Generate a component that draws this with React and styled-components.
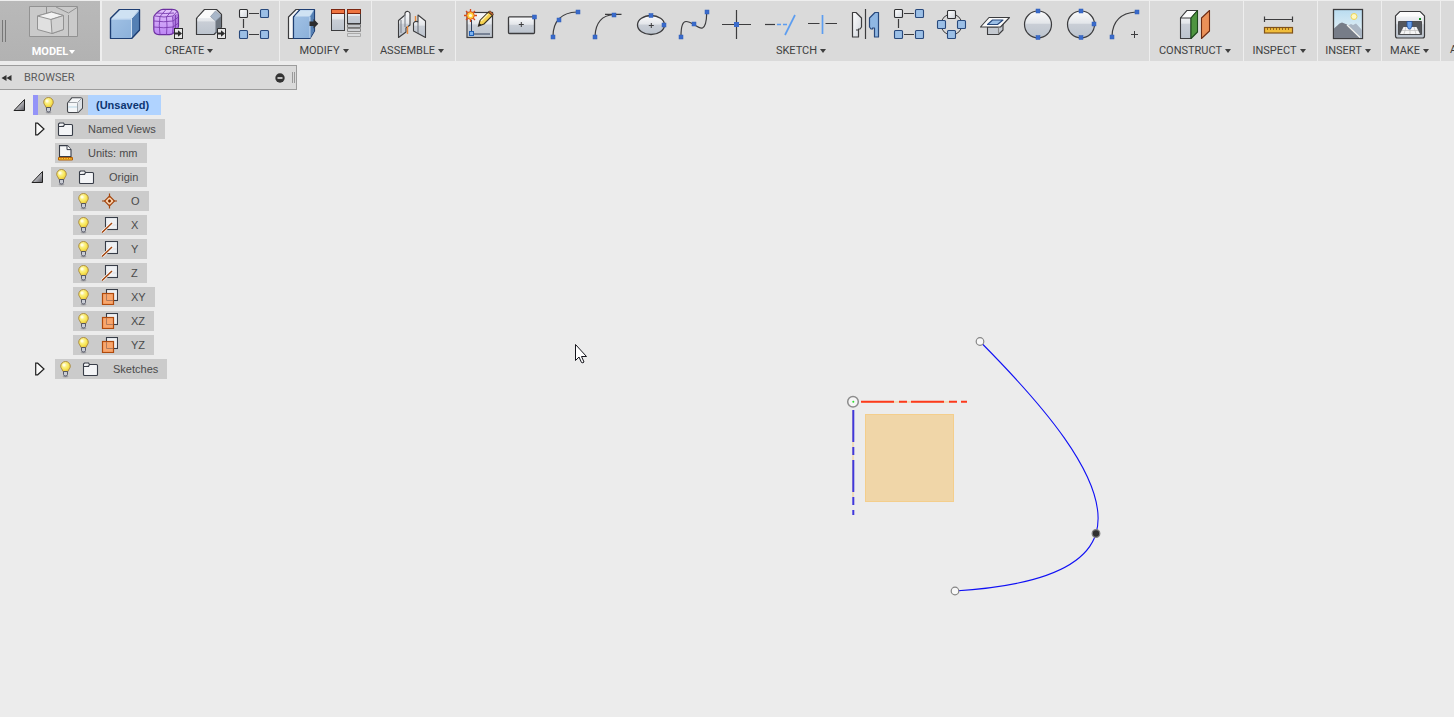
import React from "react";
import styled, { createGlobalStyle } from "styled-components";

const GlobalStyle = createGlobalStyle`
  * { box-sizing: border-box; }
  body {
    margin: 0;
    background: #ececec;
    font-family: "Liberation Sans", Arial, sans-serif;
    font-size: 11px;
  }
  button {
    border: 0;
    padding: 0;
    margin: 0;
    background: none;
    color: inherit;
    font: inherit;
    cursor: pointer;
  }
  ul { list-style: none; margin: 0; padding: 0; }
`;

const App = styled.div`
  display: flex;
  flex-direction: column;
  min-height: 100vh;
  overflow: hidden;
`;

const Toolbar = styled.header`
  display: flex;
  height: 61px;
  padding-top: 1px;
  gap: 1px;
  overflow: hidden;
  background: #eeeeee;
`;

const Group = styled.section`
  display: flex;
  flex: ${(p) => (p.$fill ? "1 0 auto" : "none")};
  flex-direction: column;
  align-items: ${(p) => (p.$fill ? "flex-start" : "center")};
  min-width: ${(p) => p.$width || 0}px;
  padding: 7px 3px 0 ${(p) => (p.$fill ? 9 : 0)}px;
  background: #dadada;
`;

const IconRow = styled.div`
  display: flex;
  gap: 11px;
  height: 32px;
`;

const Tool = styled.button`
  display: block;
  width: 32px;
  height: 32px;
`;

const MenuLabel = styled.button`
  display: flex;
  align-items: center;
  gap: 3px;
  height: 24px;
  color: #3f3f3f;
  font-family: Roboto, "Liberation Sans", sans-serif;
  font-size: 11px;
  line-height: 20px;
  white-space: nowrap;
`;

const Caret = styled.span`
  border: 3px solid transparent;
  border-top: 4px solid currentColor;
  border-bottom: 0;
`;

const Workspace = styled.section`
  display: flex;
  flex: none;
  width: 100px;
  margin-right: 1px;
  padding-left: 2px;
  background: linear-gradient(#b9b9b9, #b2b2b2);
`;

const Grip = styled.span`
  width: 4px;
  height: ${(p) => p.$height}px;
  margin-top: ${(p) => p.$top}px;
  border: solid #777;
  border-width: 0 1px;
`;

const WorkspaceMenu = styled(MenuLabel)`
  flex: 1;
  flex-direction: column;
  gap: 4px;
  height: auto;
  padding: 4px 0 0 1px;
  color: #ffffff;
  font-weight: 700;

  span {
    display: flex;
    align-items: center;
    gap: 1px;
  }
  svg { flex: none; }
`;

const Stage = styled.main`
  position: relative;
  flex: 1;
  padding-top: 4px;
`;

const Canvas = styled.svg`
  position: absolute;
  inset: 0;
  width: 100%;
  height: 100%;
`;

const Browser = styled.aside`
  position: relative;
  width: 297px;
`;

const BrowserHeader = styled.div`
  display: flex;
  align-items: center;
  height: 25px;
  padding: 0 1px;
  border: 1px solid #9c9c9c;
  border-left: 0;
  background: #dadada;
  color: #5c5c5c;

  h2 {
    flex: 1;
    margin: 0 0 0 12px;
    font-family: Roboto, "Liberation Sans", sans-serif;
    font-size: 11px;
    font-weight: 400;
  }
  button { display: flex; }
`;

const HeaderGrip = styled.span`
  width: 3px;
  height: 11px;
  margin-left: 7px;
  border: solid #999;
  border-width: 0 1px;
`;

const Tree = styled.ul`
  && {
    display: flex;
    flex-direction: column;
    gap: 4px;
    padding-top: 5px;
  }
`;

const Row = styled.li`
  display: flex;
  height: 20px;
  padding-left: ${(p) => p.$indent}px;
`;

const Toggle = styled.button`
  display: flex;
  align-items: center;
  width: 20px;
`;

const Spacer = styled.span`
  width: 20px;
`;

const Pill = styled.div`
  display: flex;
  align-items: center;
  padding: 0 9px 0 2px;
  background: #cbcbcb;
  color: #4a4a4a;
  line-height: 20px;
  white-space: nowrap;
`;

const RootPill = styled(Pill)`
  padding-right: 0;
  border-left: 5px solid #9494f8;
`;

const RootName = styled.strong`
  padding: 0 12px 0 8px;
  background: #b0d3ff;
  color: #0d3671;
`;

const BulbButton = styled.button`
  display: flex;
  width: 16px;
  margin-right: 9px;
`;

const NodeIcon = styled.svg`
  width: 18px;
  height: 16px;
  margin-right: ${(p) => (p.$root ? 5 : 13)}px;
`;

/* ---- shared gradients ---- */
const Defs = () => (
  <svg width="0" height="0" style={{ position: "absolute" }} aria-hidden="true">
    <defs>
      <linearGradient id="steel" x1="0" y1="0" x2="0" y2="1">
        <stop offset="0" stopColor="#fbfbfc" />
        <stop offset=".45" stopColor="#e3e6ea" />
        <stop offset=".5" stopColor="#c9ced6" />
        <stop offset="1" stopColor="#bcc4ce" />
      </linearGradient>
      <linearGradient id="pale" x1="0" y1="0" x2="1" y2="1">
        <stop offset="0" stopColor="#ffffff" />
        <stop offset="1" stopColor="#d0d5dc" />
      </linearGradient>
      <linearGradient id="blue" x1="0" y1="0" x2="1" y2="1">
        <stop offset="0" stopColor="#a5c4e6" />
        <stop offset="1" stopColor="#88aed9" />
      </linearGradient>
      <linearGradient id="purple" x1="0" y1="0" x2="0" y2="1">
        <stop offset="0" stopColor="#e3c4fb" />
        <stop offset="1" stopColor="#bd86f5" />
      </linearGradient>
      <linearGradient id="sky" x1="0" y1="0" x2="0" y2="1">
        <stop offset="0" stopColor="#b9dcf0" />
        <stop offset="1" stopColor="#eef5f7" />
      </linearGradient>
      <linearGradient id="wedge" x1="0" y1="0" x2="1" y2="1">
        <stop offset=".3" stopColor="#e2e2e6" />
        <stop offset="1" stopColor="#55555c" />
      </linearGradient>
      <radialGradient id="glow" cx=".4" cy=".35" r=".7">
        <stop offset="0" stopColor="#fffbc0" />
        <stop offset=".6" stopColor="#f8e758" />
        <stop offset="1" stopColor="#e8c23a" />
      </radialGradient>
    </defs>
  </svg>
);

/* ---- toolbar icon pieces ---- */
const INK = "#3c3c3e";
const Pt = ({ x, y }) => <rect x={x - 2} y={y - 2} width="4" height="4" fill="#3a6bcb" stroke="#2f5db8" strokeWidth=".5" />;
const Node = ({ x, y, white }) => (
  <rect x={x + 0.5} y={y + 0.5} width="8" height="8" rx="1" fill={white ? "url(#pale)" : "#9bbfe6"} stroke={white ? "#2f3033" : "#28497c"} strokeWidth="1.1" />
);
const ArrowTag = () => (
  <g>
    <rect x="22.5" y="20.5" width="8" height="10" fill="#e6e6e6" stroke="#2c2c2c" />
    <path d="M23 24.6h3v-2.4l4 3.3-4 3.3v-2.4h-3z" fill="#2c2c2c" />
  </g>
);
const Line = (p) => <path fill="none" stroke={INK} strokeWidth="1.2" {...p} />;

const ICONS = {
  box: (
    <g stroke="#1f3f73" strokeWidth="1.2" strokeLinejoin="round">
      <path d="M1.5 10.5 10.5 1.5h20v20.5l-8 8.5h-21z" fill="url(#blue)" />
      <path d="M1.5 10.5 10.5 1.5h20l-8 9z" fill="#cfe2f3" stroke="none" />
      <path d="M30.5 1.5V22l-8 8.5v-20z" fill="#5580b4" stroke="none" />
      <path d="M2.5 11h20M22.5 10.5V30M22.5 10.5 30 2.5" fill="none" stroke="#e2effb" strokeWidth=".8" />
      <path d="M1.5 10.5 10.5 1.5h20V22l-8 8.5h-21z" fill="none" />
    </g>
  ),
  form: (
    <g>
      <path d="M1.8 9Q2 7 7 3q2-1.6 4-1.6h9q6.500 0 6.500 6V18q0 1.500-2 4l-3 3q-1.500 1.600-4 1.600H7q-5.200 0-5.200-5z" fill="url(#purple)" stroke="#6c2fa0" strokeWidth="1.2" />
      <path d="M21 8q4-3 5-2v13l-5 6q1-8 0-17z" fill="#9a5fd0" opacity=".6" />
      <path d="M2 13q10 1.500 19 0l5.500-4M2 19q10 1.500 19 0l5.500-4M3 8q9 2 18 0l4.500-5M5 5q9 1 17 0M8 8.500q-1.500 9 0 18M14.500 9q1 9 0 17.500M20.500 8.500q1.500 8 0 17M8 8.500l6-7M14.500 9l6-7.500M23.500 7v15" fill="none" stroke="#7a3db0" strokeWidth=".9" />
      <ArrowTag />
    </g>
  ),
  solid: (
    <g strokeLinejoin="round">
      <path d="M1.500 10.500 9.500 1.500h12l5 5V19l-7.500 7.500H1.500z" fill="url(#steel)" stroke={INK} strokeWidth="1.2" />
      <path d="M2.500 10 10 2.200h10L15.500 10z" fill="#fafafa" />
      <path d="M20.500 12.500 26 7v12l-5.500 7z" fill="#6f7781" />
      <path d="M15.500 8.500 20.500 3l5.500 5-5.500 5z" fill="#a9b7c9" stroke="#8893a3" strokeWidth=".7" />
      <ArrowTag />
    </g>
  ),
  pattern: (
    <g>
      <Line d="M11 5.500h10M5.500 11v9M11 26.500h10" />
      <Node x={1} y={1} white /><Node x={22} y={1} /><Node x={1} y={22} /><Node x={22} y={22} />
    </g>
  ),
  press: (
    <g strokeLinejoin="round" strokeWidth="1.2">
      <path d="M1.500 9 9 1.500h5L6.500 9v21.500h-5z" fill="#f7f8f9" stroke={INK} />
      <path d="M6.500 9 13 1.500h14.500V23l-4.500 7.500H6.500z" fill="url(#blue)" stroke="#1f3f73" />
      <path d="M7.500 8.500 13.500 2.200h13L22.500 8.500z" fill="#cfe2f3" />
      <path d="M23 9 27 2.500V23l-4 7z" fill="#5580b4" />
      <path d="M23 9v21" stroke="#d5e6f7" strokeWidth=".8" />
      <path d="M22.500 13.500h4V11l4.800 4.800-4.800 4.700V18h-4z" fill="#2b2b2d" />
    </g>
  ),
  tables: (
    <g strokeWidth="1">
      <rect x="1.500" y="1.500" width="13" height="21" fill="url(#steel)" stroke={INK} />
      <rect x="1.500" y="1.500" width="13" height="4" fill="#ef7440" stroke="#7c2711" />
      <rect x="17.500" y="1.500" width="13" height="14" fill="url(#steel)" stroke={INK} />
      <rect x="17.500" y="1.500" width="13" height="4" fill="#ef7440" stroke="#7c2711" />
      <path d="M17.500 16.500h13v3h-13z" fill="#c2c5c9" stroke="#777" />
      <path d="M17.500 20.500h13v3h-13z" fill="#d0d2d5" stroke="#888" />
      <path d="M17.500 25.500h13v3h-13z" fill="#dadcde" stroke="#aaa" />
    </g>
  ),
  joint: (
    <g stroke={INK} strokeWidth="1.1" strokeLinejoin="round">
      <path d="M2.500 12.500 9 7V5q1-2 3-1.500t2 2V17l-4 3v4L2.500 29.500z" fill="url(#steel)" />
      <path d="M9 7v12M5 12v13" fill="none" stroke="#80868e" />
      <path d="M11.500 18v8M19.500 8v8" stroke="#ea8a3c" strokeWidth="1.4" />
      <path d="M17.500 15q2-2.500 4.500-1V7l7.500 6v16.500L17.500 23z" fill="url(#steel)" />
      <path d="M22 14v11" fill="none" stroke="#70767e" />
    </g>
  ),
  sketch: (
    <g>
      <rect x="4" y="4.500" width="25.500" height="25" fill="url(#steel)" stroke={INK} strokeWidth="1.2" />
      <path d="M8.500 12v14H27" fill="none" stroke="#2f3d58" />
      <rect x="6.500" y="23.500" width="4" height="4" fill="#7fb4f0" stroke="#1f5fb5" />
      <path d="M15.500 18 17 12.500 25.500 4 29.500 7.500 21 16z" fill="#f6d250" stroke="#3a3020" strokeWidth="1.1" />
      <path d="M25.500 4 27 2.800 30.500 6 29.500 7.500z" fill="#c9622e" stroke="#3a3020" strokeWidth=".6" />
      <path d="m18 13 7-7" stroke="#fff5b8" strokeWidth="1.300" />
      <path d="m15.500 18 .8-3 2.200 2z" fill="#222" />
      <path d="M7.500 1v13M1 7.500h13M3 3l9 9M12 3l-9 9" stroke="#d4481a" strokeWidth="1.300" />
      <circle cx="7.500" cy="7.500" r="3.800" fill="#ffce3a" stroke="#e2571c" />
      <circle cx="7.500" cy="7.500" r="1.600" fill="#fffbe0" />
    </g>
  ),
  rect: (
    <g>
      <rect x="2.500" y="8.800" width="26" height="16.700" rx="1" fill="url(#steel)" stroke={INK} strokeWidth="1.300" />
      <Line d="M12.800 16.500h5M15.300 14v5" strokeWidth="1" /><Pt x={28.500} y={9} />
    </g>
  ),
  arc3: <g><Line d="M4 28Q4.500 5 28 4" /><Pt x={4} y={29} /><Pt x={10} y={12} /><Pt x={29} y={4} /></g>,
  tangent: <g><Line d="M3 28Q4 8 21.500 6.500M13 6.300h16.500" /><Pt x={3} y={29} /><Pt x={22} y={7} /></g>,
  ellipse: (
    <g>
      <ellipse cx="16" cy="17" rx="13.500" ry="9.500" fill="url(#steel)" stroke={INK} strokeWidth="1.300" />
      <Line d="M13.800 17.500h5M16.300 15v5" strokeWidth="1" /><Pt x={16} y={7.500} /><Pt x={29} y={17} />
    </g>
  ),
  spline: <g><Line d="M3 28Q3 13.500 8 13.500 11 13.500 16 16.500 21.500 20.500 24.500 20 28.500 18 28.700 5" /><Pt x={3} y={29} /><Pt x={16} y={16} /><Pt x={29} y={4} /></g>,
  point: <g><Line d="M1 16.500h29M15.500 2v29" /><rect x="13" y="14" width="5" height="5" fill="#3a6bcb" /></g>,
  extend: <g><Line d="M1 16.500h10" /><path d="M13 16.500h10" stroke="#5c9df0" strokeWidth="1.400" strokeDasharray="4 2" /><path d="m31 7-10 20" stroke="#5c9df0" strokeWidth="1.700" /></g>,
  trim: <g><Line d="M1 15.500h11.500M18.500 15.500H30" /><path d="M15.500 7v19" stroke="#5c9df0" strokeWidth="1.700" /></g>,
  mirror: (
    <g strokeLinejoin="round" strokeWidth="1.200">
      <path d="M2.500 4.500h3.500l5.500 5.500v9l-1.500 2H8.500v8h-6z" fill="url(#pale)" stroke={INK} />
      <path d="M6 22h2" stroke={INK} /><Line d="M15.500 1v30" />
      <path d="M28.500 4.500H25L19.500 10v9l1.500 2h1.500v-1h2v9h4z" fill="#8fb7e3" stroke="#28497c" />
    </g>
  ),
  circular: (
    <g>
      <circle cx="15.500" cy="16.500" r="10.500" fill="none" stroke={INK} />
      <Node x={11} y={2} white /><Node x={1} y={12} /><Node x={21} y={12} /><Node x={11} y={22} />
    </g>
  ),
  project: (
    <g stroke={INK} strokeWidth="1.100" strokeLinejoin="round">
      <path d="M8.500 19h11l4.500-4v7l-4.500 4.500h-11z" fill="#c4c9d0" />
      <path d="M10 9.500h20.500l-9 9.500H1.500z" fill="#fbfbfb" />
      <path d="M13.500 12H24l-5.500 4.500h-10z" fill="#9bbfe6" stroke="#28497c" />
      <path d="M19.500 19.500V26" stroke="#888" />
    </g>
  ),
  circle2: <g><circle cx="16" cy="16.500" r="13.500" fill="url(#steel)" stroke={INK} strokeWidth="1.200" /><Pt x={16} y={3} /><Pt x={16} y={29.500} /></g>,
  circle3: <g><circle cx="16" cy="16.500" r="13.500" fill="url(#steel)" stroke={INK} strokeWidth="1.200" /><Pt x={16} y={3} /><Pt x={16} y={29.500} /><Pt x={29} y={16} /></g>,
  centerArc: <g><Line d="M4 28Q5 5.500 28 4" /><Line d="M23 26.500h7M26.500 23v7" strokeWidth="1" /><Pt x={4} y={29} /><Pt x={29} y={4} /></g>,
  plane: (
    <g strokeWidth="1.100" strokeLinejoin="round">
      <path d="M1.500 10 8 2.500h10.500L12 10v20.500H1.500z" fill="url(#steel)" stroke={INK} />
      <path d="M1.500 10 8 2.500h10.500L12 10z" fill="#fcfcfc" stroke={INK} />
      <path d="M12 10 18.500 2.500V24L12 30.500z" fill="#4f9540" stroke="#1e4a1c" />
      <path d="m22.500 10 8-7.500V23l-8 7.500z" fill="#eb9159" stroke="#6e2b12" />
    </g>
  ),
  measure: (
    <g>
      <Line d="M1.500 8.500V14M29.500 8.500V14M1.500 11.500h28" />
      <rect x="1.500" y="19.500" width="28" height="5.500" fill="#f0bd3a" stroke="#80521a" strokeWidth="1.200" />
      <path d="M4.500 20v2M7.500 20v2M10.500 20v2M13.500 20v2M16.500 20v2M19.500 20v2M22.500 20v2M25.500 20v2" stroke="#80521a" strokeWidth=".8" />
    </g>
  ),
  image: (
    <g>
      <rect x="1.500" y="1.500" width="29" height="29" fill="url(#sky)" stroke={INK} strokeWidth="1.300" />
      <circle cx="22" cy="8.500" r="3" fill="#fff8c0" stroke="#ecd455" />
      <path d="m15 18 4-2 2 1 3-1.500 6 6.500v8H15z" fill="#aab6c4" />
      <path d="M2 20.500 7.500 15.500 10 14.500l5 2L28 30H2z" fill="#777d88" />
      <path d="M15 17 28 29.500" stroke="#f3f3ef" strokeWidth="1.200" />
    </g>
  ),
  printer: (
    <g strokeLinejoin="round">
      <path d="M1.500 8 6 3.500h20L30.500 8v20q0 2-2 2h-25q-2 0-2-2z" fill="url(#steel)" stroke={INK} strokeWidth="1.200" />
      <path d="M2 8.500 6.500 4h19L30 8.500z" fill="#fcfcfc" />
      <path d="M4.500 13.500h23v13h-23z" fill="#55585d" stroke={INK} strokeWidth=".8" />
      <path d="M9.500 19h13L26 26H6z" fill="#f5f5f5" />
      <path d="M8 22.500h16M12 19l-2 7M16 19v7M20 19l2 7" stroke="#bbb" strokeWidth=".7" />
      <path d="M13 13.500h5V18l-1.500 3h-2L13 18z" fill="#6aa0e8" stroke="#1e4e9c" strokeWidth=".8" />
      <rect x="25" y="10" width="2" height="2" fill="#128a20" />
    </g>
  ),
};

const GROUPS = [
  { label: "CREATE", width: 177, tools: [["box", "Box"], ["form", "Create form"], ["solid", "Base feature"], ["pattern", "Pattern"]] },
  { label: "MODIFY", width: 91, tools: [["press", "Press pull"], ["tables", "Parameters"]] },
  { label: "ASSEMBLE", width: 83, tools: [["joint", "Joint"]] },
  {
    label: "SKETCH",
    width: 693,
    tools: [
      ["sketch", "Create sketch"], ["rect", "Rectangle"], ["arc3", "Three point arc"], ["tangent", "Tangent arc"],
      ["ellipse", "Ellipse"], ["spline", "Spline"], ["point", "Point"], ["extend", "Extend"], ["trim", "Trim"],
      ["mirror", "Mirror"], ["pattern", "Rectangular pattern"], ["circular", "Circular pattern"], ["project", "Project"],
      ["circle2", "Two point circle"], ["circle3", "Three point circle"], ["centerArc", "Center point arc"],
    ],
  },
  { label: "CONSTRUCT", width: 93, tools: [["plane", "Offset plane"]] },
  { label: "INSPECT", width: 73, tools: [["measure", "Measure"]] },
  { label: "INSERT", width: 63, tools: [["image", "Attached canvas"]] },
  { label: "MAKE", width: 58, tools: [["printer", "3D print"]] },
];

const ToolGroup = ({ label, width, tools }) => (
  <Group $width={width}>
    <IconRow>
      {tools.map(([icon, name]) => (
        <Tool key={name} aria-label={name}>
          <svg width="32" height="32" viewBox="0 0 32 32" aria-hidden="true">{ICONS[icon]}</svg>
        </Tool>
      ))}
    </IconRow>
    <MenuLabel>{label}<Caret /></MenuLabel>
  </Group>
);

/* ---- tree icons ---- */
const Bulb = () => (
  <svg width="16" height="18" viewBox="0 0 16 18" aria-hidden="true">
    <ellipse cx="8.500" cy="16.500" rx="3" ry="1" fill="#a5a5a8" />
    <path d="M8.500 1.500a4.800 4.800 0 0 1 4.800 4.700c0 2.200-1.700 3-2.300 5.300H6C5.400 9.200 3.700 8.400 3.700 6.200A4.800 4.800 0 0 1 8.500 1.500z" fill="url(#glow)" stroke="#a5843c" strokeWidth=".9" />
    <circle cx="7" cy="5" r="1.500" fill="#fffde0" />
    <path d="M6.500 11.500h4v3l-1 1.500h-2l-1-1.500z" fill="#c9ccd4" stroke="#4a4d5c" strokeWidth=".9" />
  </svg>
);

const TREE_ICONS = {
  cube: (
    <g strokeLinejoin="round">
      <path d="M2.500 6 7 .7h8.500q2 0 2 2V11L13 15.500H4q-1.500 0-1.500-1.500z" fill="#f4f6f8" stroke="#44474c" strokeWidth="1.100" />
      <path d="M12.500 6 17 1.500V11l-4.500 4.500z" fill="#dde1e6" />
      <path d="M3 9h9.500v2H3z" fill="#d6e6ef" />
      <path d="M3 5.500h8.500q1 0 1 1V15M12.500 5.500 16.500 1.500" fill="none" stroke="#8a8f96" strokeWidth=".8" />
    </g>
  ),
  folder: <path d="M1.500 13.500V3L2.500 2h4l1 1.500h7q1 0 1 1v9q0 1-1 1h-12q-1 0-1-1zM1.500 5.500h5l1-2" fill="#f3f4f6" stroke="#383d48" strokeWidth="1.100" />,
  units: (
    <g>
      <path d="M2.500 11.500V.600h8l3.500 4V11.500z" fill="#f6f7f8" stroke="#383d48" strokeWidth="1.100" />
      <path d="M10 .600v4h4" fill="#fff" stroke="#383d48" />
      <path d="M1.500 12.500h14v2.500h-14z" fill="#ffc933" stroke="#b5620a" />
      <path d="M4 12.500v1.500M6.500 12.500v1.500M9 12.500v1.500M11.500 12.500v1.500M14 12.500v1.500" stroke="#b5620a" strokeWidth=".8" />
    </g>
  ),
  origin: (
    <g stroke="#a3460f" fill="none">
      <path d="M9.500 3 14.500 8 9.500 13 4.500 8z" fill="#fbd3ad" strokeWidth="1.100" />
      <path d="M9.500.500v4M9.500 11.500v4M2 8h4M13 8h4" strokeWidth="1.200" />
      <circle cx="9.500" cy="8" r="1.200" fill="#5c2408" />
    </g>
  ),
  axis: (
    <g>
      <rect x="5.500" y=".500" width="12" height="12" fill="#eef0f3" stroke="#383d48" strokeWidth="1.100" />
      <path d="M6 8h11" stroke="#d9dde3" />
      <path d="m2 15.500 10-9.500" stroke="#fff" strokeWidth="3" /><path d="m2 15.500 10-9.500" stroke="#a3460f" strokeWidth="1.500" />
    </g>
  ),
  plane: (
    <g>
      <rect x="6.500" y=".500" width="11" height="11" fill="#eef0f3" stroke="#383d48" strokeWidth="1.100" />
      <rect x="2.500" y="4.500" width="11" height="11" fill="#f9a66c" stroke="#b04a0c" strokeWidth="1.200" />
      <path d="M6.500 5v6.500H13" fill="none" stroke="#b07a5c" />
    </g>
  ),
};

const NODES = [
  { name: "Named Views", indent: 35, toggle: "closed", icon: "folder" },
  { name: "Units: mm", indent: 35, icon: "units" },
  { name: "Origin", indent: 31, toggle: "open", bulb: true, icon: "folder" },
  { name: "O", indent: 53, bulb: true, icon: "origin" },
  { name: "X", indent: 53, bulb: true, icon: "axis" },
  { name: "Y", indent: 53, bulb: true, icon: "axis" },
  { name: "Z", indent: 53, bulb: true, icon: "axis" },
  { name: "XY", indent: 53, bulb: true, icon: "plane" },
  { name: "XZ", indent: 53, bulb: true, icon: "plane" },
  { name: "YZ", indent: 53, bulb: true, icon: "plane" },
  { name: "Sketches", indent: 35, toggle: "closed", bulb: true, icon: "folder" },
];

const Disclosure = ({ state }) =>
  state ? (
    <Toggle aria-label={state === "open" ? "Collapse" : "Expand"}>
      <svg width="13" height="14" viewBox="0 0 13 14" aria-hidden="true">
        {state === "open" ? (
          <path d="M11.500 1.500v11H1z" fill="url(#wedge)" stroke="#222" />
        ) : (
          <path d="M.700 1.200h2L9 7l-6.300 5.800h-2z" fill="#fafafa" stroke="#222" strokeWidth="1.200" />
        )}
      </svg>
    </Toggle>
  ) : (
    <Spacer />
  );

const Visibility = ({ name }) => (
  <BulbButton aria-label={`Toggle visibility of ${name}`}><Bulb /></BulbButton>
);

const Glyph = ({ icon, root }) => (
  <NodeIcon viewBox="0 0 18 16" $root={root} aria-hidden="true">{TREE_ICONS[icon]}</NodeIcon>
);

const BrowserPanel = () => (
  <Browser>
    <BrowserHeader>
      <button aria-label="Collapse browser">
        <svg width="11" height="8" viewBox="0 0 11 8"><path d="M5.500 1v6L.500 4zM10.500 1v6l-5-3z" fill="#333" /></svg>
      </button>
      <h2>BROWSER</h2>
      <button aria-label="Minimize browser">
        <svg width="10" height="10" viewBox="0 0 10 10"><circle cx="5" cy="5" r="4.700" fill="#333" /><path d="M2.500 5h5" stroke="#eee" strokeWidth="1.500" /></svg>
      </button>
      <HeaderGrip />
    </BrowserHeader>
    <Tree>
      <Row $indent={13}>
        <Disclosure state="open" />
        <RootPill>
          <Visibility name="document" />
          <Glyph icon="cube" root />
          <RootName>(Unsaved)</RootName>
        </RootPill>
      </Row>
      {NODES.map(({ name, indent, toggle, bulb, icon }) => (
        <Row key={name} $indent={indent}>
          <Disclosure state={toggle} />
          <Pill>
            {bulb && <Visibility name={name} />}
            <Glyph icon={icon} />
            {name}
          </Pill>
        </Row>
      ))}
    </Tree>
  </Browser>
);

const Drawing = () => (
  <Canvas aria-label="Sketch canvas">
    <rect x="865.500" y="353.500" width="88" height="87" fill="#f0d6a8" stroke="#f4ce8c" />
    <path d="M862 341h87M853 350v86" stroke="#f4ce8c" fill="none" />
    <path d="M861 340.800h33M899 340.800h8M911 340.800h33M949 340.800h8M961 340.800h6" stroke="#fc3a1c" strokeWidth="2" />
    <path d="M853.300 349v32M853.300 386v8M853.300 399v32M853.300 436v8M853.300 449v5" stroke="#4038dc" strokeWidth="2" />
    <circle cx="853" cy="340.800" r="5.300" fill="#f6f6f6" stroke="#8c8c8c" strokeWidth="1.500" />
    <circle cx="853.300" cy="340.800" r="1" fill="#2be02b" />
    <path d="M980 280.500C1034 335 1112 419 1096 472.500 1084 512 1020 526 955 530" fill="none" stroke="#1010f5" strokeWidth="1.100" />
    <circle cx="980" cy="280.500" r="3.800" fill="#f8f8f8" stroke="#858585" strokeWidth="1.200" />
    <circle cx="955" cy="530" r="3.800" fill="#f8f8f8" stroke="#858585" strokeWidth="1.200" />
    <circle cx="1096" cy="472.500" r="3.800" fill="#303030" stroke="#808080" strokeWidth="1.300" />
    <path d="M575.500 283.500v16l3.500-3.500 2.500 5.500q1.500.800 2.500-.500L581.500 295.500h5z" fill="#fff" stroke="#15151c" />
  </Canvas>
);

export default function Modeler() {
  return (
    <App>
      <GlobalStyle />
      <Defs />
      <Toolbar>
        <Workspace>
          <Grip $top={19} $height={22} />
          <WorkspaceMenu>
            <svg width="50" height="33" viewBox="0 0 50 33" aria-hidden="true">
              <g stroke="#929292" fill="none" strokeLinejoin="round">
                <rect x=".500" y="1.500" width="48" height="30" fill="#cacaca" />
                <path d="M17.500 2v6M39.500 10v21M39.500 8 27 2M39.500 8 48 2.500" />
                <path d="m8.500 11 14-4 12 3.500v14L23 28.500 8.500 24.500z" fill="#e0e0e0" />
                <path d="m8.500 11 14-4 12 3.500L22 14.500z" fill="#f2f2f2" />
                <path d="M22 14.500 23 28.500 34.500 24.500v-14z" fill="#d2d2d2" />
              </g>
            </svg>
            <span>MODEL<Caret /></span>
          </WorkspaceMenu>
        </Workspace>
        {GROUPS.map((g) => <ToolGroup key={g.label} {...g} />)}
        <Group $fill>
          <IconRow />
          <MenuLabel>ADD-INS<Caret /></MenuLabel>
        </Group>
      </Toolbar>
      <Stage>
        <Drawing />
        <BrowserPanel />
      </Stage>
    </App>
  );
}
